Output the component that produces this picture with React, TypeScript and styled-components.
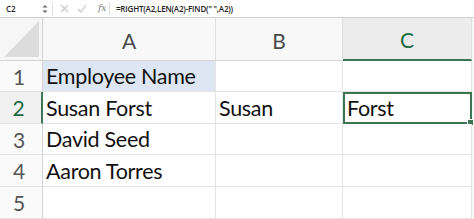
import styled, { createGlobalStyle } from "styled-components";

const GlobalStyle = createGlobalStyle`
  html, body {
    margin: 0;
    padding: 0;
    background: #ffffff;
  }
  body {
    font-family: "Lato", "Open Sans", sans-serif;
    overflow: hidden;
  }
`;

const columns = ["A", "B", "C"];
const activeColumn = "C";
const activeRow = 2;

const rows: string[][] = [
  ["Employee Name", "", ""],
  ["Susan Forst", "Susan", "Forst"],
  ["David Seed", "", ""],
  ["Aaron Torres", "", ""],
  ["", "", ""],
];

export default function App() {
  return (
    <>
      <GlobalStyle />
      <Page>
        <FormulaBar>
          <NameBox>C2</NameBox>
          <Stepper>
            <svg width="6" height="10" viewBox="0 0 6 10">
              <path d="M0.5 3.5 L3 1 L5.5 3.5 Z" fill="#666" />
              <path d="M0.5 6.5 L3 9 L5.5 6.5 Z" fill="#666" />
            </svg>
          </Stepper>
          <Divider />
          <IconButton>
            <svg width="9" height="9" viewBox="0 0 9 9">
              <path d="M1 1 L8 8 M8 1 L1 8" stroke="#c9c9c9" strokeWidth="1.2" />
            </svg>
          </IconButton>
          <IconButton>
            <svg width="10" height="9" viewBox="0 0 10 9">
              <path d="M1 5 L3.8 8 L9 1" stroke="#c9c9c9" strokeWidth="1.2" fill="none" />
            </svg>
          </IconButton>
          <FxLabel>fx</FxLabel>
          <FormulaInput>=RIGHT(A2,LEN(A2)-FIND(" ",A2))</FormulaInput>
        </FormulaBar>
        <Sheet>
          <Corner>
            <svg width="100%" height="100%" viewBox="0 0 42 42" preserveAspectRatio="none">
              <path d="M39 3 L39 39 L4 39 Z" fill="#dcdcdc" />
            </svg>
          </Corner>
          {columns.map((c) => (
            <ColHeader key={c} $active={c === activeColumn}>
              {c}
            </ColHeader>
          ))}
          <Spare />
          {rows.map((cells, i) => {
            const n = i + 1;
            return (
              <Row key={n}>
                <RowHeader $active={n === activeRow}>{n}</RowHeader>
                {cells.map((text, j) => {
                  const selected = n === activeRow && columns[j] === activeColumn;
                  return (
                    <Cell key={j} $highlight={n === 1 && j === 0} $selected={selected}>
                      {text}
                      {selected && <Handle />}
                    </Cell>
                  );
                })}
                <Spare />
              </Row>
            );
          })}
        </Sheet>
      </Page>
    </>
  );
}

const Page = styled.div`
  width: 474px;
  height: 219px;
  overflow: hidden;
`;

const FormulaBar = styled.div`
  display: flex;
  align-items: center;
  height: 17px;
  border-bottom: 1px solid #cfcfcf;
  background: #ffffff;
  font-family: "Open Sans", "Liberation Sans", sans-serif;
`;

const NameBox = styled.div`
  box-sizing: border-box;
  width: 42px;
  padding-left: 6px;
  font-size: 8px;
  font-weight: 600;
  color: #222;
`;

const Stepper = styled.div`
  display: flex;
  align-items: center;
  width: 8px;
`;

const Divider = styled.div`
  width: 1px;
  height: 13px;
  background: #dedede;
  margin: 0 3px 0 2px;
`;

const IconButton = styled.div`
  display: flex;
  align-items: center;
  justify-content: center;
  width: 17px;
`;

const FxLabel = styled.div`
  box-sizing: border-box;
  width: 20px;
  padding-left: 8px;
  margin-right: 6px;
  border-right: 1px solid #dedede;
  font-family: "DejaVu Serif", "Liberation Serif", serif;
  font-style: italic;
  font-size: 9px;
  line-height: 13px;
  color: #777;
`;

const FormulaInput = styled.div`
  font-size: 8px;
  font-weight: 600;
  color: #222;
  white-space: pre;
  letter-spacing: -0.2px;
`;

const Sheet = styled.div`
  display: grid;
  grid-template-columns: 43px 173px 127px 129px 2px;
  grid-template-rows: 43px 31px 32px 31px 32px 32px;
`;

const Corner = styled.div`
  background: #f6f6f6;
  border-right: 1px solid #d4d4d4;
  border-bottom: 1px solid #d4d4d4;
  box-sizing: border-box;
  display: flex;
`;

const ColHeader = styled.div<{ $active: boolean }>`
  display: flex;
  align-items: center;
  justify-content: center;
  box-sizing: border-box;
  background: ${(p) => (p.$active ? "#ececec" : "#f8f8f8")};
  color: ${(p) => (p.$active ? "#1f6a43" : "#4a4a4a")};
  border-right: 1px solid #e0e0e0;
  border-bottom: ${(p) => (p.$active ? "2px solid #3b7553" : "1px solid #d4d4d4")};
  font-size: 21px;
  padding-top: 2px;
`;

const Spare = styled.div`
  background: #f8f8f8;
`;

const Row = styled.div`
  display: contents;
`;

const RowHeader = styled.div<{ $active: boolean }>`
  display: flex;
  align-items: center;
  justify-content: center;
  box-sizing: border-box;
  padding-right: 4px;
  background: ${(p) => (p.$active ? "#f1f1f1" : "#fafafa")};
  color: ${(p) => (p.$active ? "#1f6a43" : "#555")};
  border-right: ${(p) => (p.$active ? "2px solid #3b7553" : "1px solid #d4d4d4")};
  border-bottom: 1px solid #e4e4e4;
  font-size: 21px;
`;

const Cell = styled.div<{ $highlight: boolean; $selected: boolean }>`
  position: relative;
  display: flex;
  align-items: center;
  box-sizing: border-box;
  padding-left: ${(p) => (p.$selected ? "2px" : "3px")};
  background: ${(p) => (p.$highlight ? "#dde6f2" : "#ffffff")};
  border-right: 1px solid #e4e4e4;
  border-bottom: 1px solid #e4e4e4;
  ${(p) => (p.$selected ? "border: 2px solid #3b7553;" : "")}
  color: #111;
  font-size: 21.5px;
  letter-spacing: -0.3px;
  white-space: nowrap;
`;

const Handle = styled.div`
  position: absolute;
  right: -4px;
  bottom: -4px;
  width: 5px;
  height: 5px;
  background: #3b7553;
  border: 1px solid #ffffff;
`;
